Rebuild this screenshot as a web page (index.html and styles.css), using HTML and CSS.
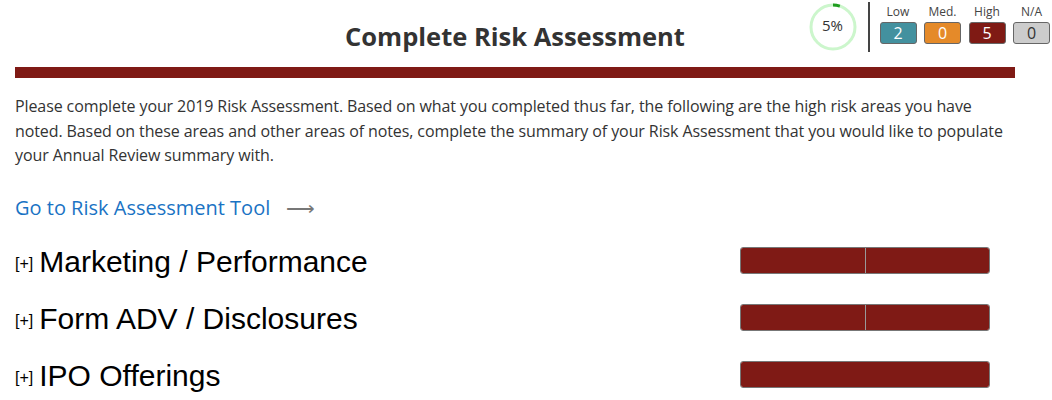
FILE: index.html
```html
<!DOCTYPE html>
<html lang="en">
<head>
    <meta charset="UTF-8">
    <meta name="viewport" content="width=device-width, initial-scale=1.0">
    <title>Complete Risk Assessment</title>
    <link rel="stylesheet" href="styles.css">
</head>
<body>
    <main class="page">
        <header class="head">
            <div></div>
            <h1>Complete Risk Assessment</h1>
            <div class="status">
                <div class="progress">
                    <svg width="50" height="50" viewBox="0 0 50 50">
                        <circle cx="25" cy="25" r="22" fill="none" stroke="#ccf6cc" stroke-width="3"/>
                        <circle cx="25" cy="25" r="22" fill="none" stroke="#1f9d1f" stroke-width="3"
                            stroke-dasharray="7 200" transform="rotate(-90 25 25)"/>
                    </svg>
                    <span>5%</span>
                </div>
                <div class="counts">
                    <div class="count"><span>Low</span><b class="low">2</b></div>
                    <div class="count"><span>Med.</span><b class="med">0</b></div>
                    <div class="count"><span>High</span><b class="high">5</b></div>
                    <div class="count"><span>N/A</span><b class="na">0</b></div>
                </div>
            </div>
        </header>
        <div class="rule"></div>
        <p class="intro">
            Please complete your 2019 Risk Assessment. Based on what you completed thus far, the following are the high risk areas you have noted. Based on these areas and other areas of notes, complete the summary of your Risk Assessment that you would like to populate your Annual Review summary with.
        </p>
        <a class="tool" href="#">Go to Risk Assessment Tool <span class="arrow">&#10230;</span></a>

        <section class="area">
            <h2><span class="toggle">[+]</span>Marketing / Performance</h2>
            <div class="meter split"><i></i><i></i></div>
        </section>
        <section class="area">
            <h2><span class="toggle">[+]</span>Form ADV / Disclosures</h2>
            <div class="meter split"><i></i><i></i></div>
        </section>
        <section class="area">
            <h2><span class="toggle">[+]</span>IPO Offerings</h2>
            <div class="meter"><i></i></div>
        </section>
    </main>
</body>
</html>
```

FILE: styles.css
```css
body {
  margin: 0;
  font-family: "Open Sans", sans-serif;
  color: #333;
  background: #fff;
}

.page {
  width: 1000px;
  margin-left: 15px;
}

.head {
  display: grid;
  grid-template-columns: 1fr auto 1fr;
  align-items: start;
  height: 67px;
}

.head h1 {
  margin: 18px 0 0;
  font-size: 25.5px;
  font-weight: 700;
  color: #333;
  line-height: 36px;
}

.status {
  display: flex;
  justify-content: flex-end;
  margin-right: -35px;
  margin-top: 2px;
}

.progress {
  position: relative;
  width: 50px;
  height: 50px;
  margin-right: 10px;
}

.progress svg {
  display: block;
}

.progress span {
  position: absolute;
  top: 0;
  left: 0;
  width: 50px;
  line-height: 46px;
  text-align: center;
  font-size: 15px;
  color: #333;
}

.counts {
  display: flex;
  gap: 7.5px;
  border-left: 2px solid #444;
  padding-left: 10px;
  height: 50px;
}

.count {
  display: flex;
  flex-direction: column;
  align-items: center;
  width: 37px;
}

.count span {
  font-size: 12px;
  line-height: 20px;
  color: #444;
}

.count b {
  display: block;
  box-sizing: border-box;
  width: 37px;
  height: 22px;
  line-height: 20px;
  text-align: center;
  font-weight: 400;
  font-size: 16px;
  color: #fff;
  border: 1px solid #666;
  border-radius: 3px;
}

.low { background: #43919f; }
.med { background: #e58a29; }
.high { background: #7f1a14; }
.na { background: #cccccc; color: #333 !important; }

.rule {
  height: 11px;
  background: #7f1a15;
}

.intro {
  margin: 16px 0 0;
  font-size: 16px;
  line-height: 24.5px;
  letter-spacing: -0.1px;
  color: #333;
}

.tool {
  display: inline-block;
  margin-top: 25px;
  font-size: 20px;
  line-height: 30px;
  color: #1a73c4;
  text-decoration: none;
}

.arrow {
  color: #777;
  margin-left: 11px;
}

.area {
  display: flex;
  align-items: center;
  height: 57px;
}

.area:first-of-type {
  margin-top: 11px;
}

.area h2 {
  width: 725px;
  margin: 0;
  font-family: "Liberation Sans", Arial, sans-serif;
  font-weight: 400;
  font-size: 30px;
  color: #000;
}

.toggle {
  font-size: 16px;
  margin-right: 6px;
  vertical-align: 3px;
}

.meter {
  display: flex;
  box-sizing: border-box;
  width: 250px;
  height: 27px;
  border: 1px solid #777;
  border-radius: 3px;
  overflow: hidden;
  margin-top: -4px;
}

.meter i {
  flex: 1;
  background: #7f1a15;
}

.meter.split i + i {
  border-left: 1px solid #999;
}
```
